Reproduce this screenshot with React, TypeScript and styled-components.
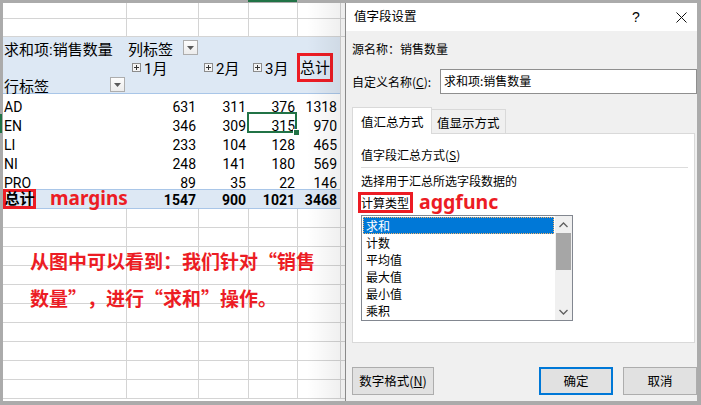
import React from "react";
import styled, { createGlobalStyle } from "styled-components";

const RED = "#ec1c24";
const GRID = "#d4d4d4";
const PIVOT_BG = "#dde8f4";
const PIVOT_LINE = "#a9c6e8";
const XL_GREEN = "#217346";
const SHEET_FONT = `"Roboto", "Noto Sans CJK SC", sans-serif`;
const UI_FONT = `"Noto Sans CJK SC", "Noto Sans", sans-serif`;

const GRID_COLS = [124, 72, 50, 49, 43, 4];
const PIVOT_COLS = [124, 72, 50, 49, 42];

const DATA: [string, number, number, number, number][] = [
  ["AD", 631, 311, 376, 1318],
  ["EN", 346, 309, 315, 970],
  ["LI", 233, 104, 128, 465],
  ["NI", 248, 141, 180, 569],
  ["PRO", 89, 35, 22, 146],
];
const TOTALS = [1547, 900, 1021, 3468];
const AGG_ITEMS = ["求和", "计数", "平均值", "最大值", "最小值", "乘积"];

const GlobalStyle = createGlobalStyle`
  html, body { margin: 0; padding: 0; background: #ababab; }
  body { width: 701px; height: 405px; overflow: hidden; }
`;

const Frame = styled.div`
  width: 701px;
  height: 405px;
  box-sizing: border-box;
  background: #ababab;
  display: flex;
  flex-direction: column;
  padding: 0 4px 4px 0;
`;

const TopStrip = styled.div`
  height: 3px;
  flex: none;
  display: flex;
`;

const ColMark = styled.div`
  margin-left: 248px;
  width: 49px;
  height: 2px;
  background: ${XL_GREEN};
`;

const Main = styled.div`
  display: flex;
  flex: 1;
  min-height: 0;
`;

const LeftStrip = styled.div`
  width: 3px;
  flex: none;
  display: flex;
  flex-direction: column;
`;

const RowMark = styled.div`
  margin-top: 111px;
  height: 19px;
  width: 2px;
  background: ${XL_GREEN};
`;

const Sheet = styled.div`
  width: 342px;
  flex: none;
  background: #fff;
  position: relative;
  overflow: hidden;
  display: flex;
  flex-direction: column;
  font-family: ${SHEET_FONT};
  color: #000;
  &::after {
    content: "";
    position: absolute;
    top: 0;
    right: 0;
    bottom: 0;
    width: 38px;
    background: linear-gradient(to right, rgba(0, 0, 0, 0), rgba(0, 0, 0, 0.07));
    pointer-events: none;
  }
`;

const GridRow = styled.div<{ $h: number }>`
  display: flex;
  flex: none;
  height: ${(p) => p.$h}px;
  box-sizing: border-box;
  border-bottom: 1px solid ${GRID};
`;

const GridCell = styled.div<{ $w: number }>`
  flex: none;
  width: ${(p) => p.$w}px;
  box-sizing: border-box;
  border-right: 1px solid ${GRID};
  &:last-child {
    border-right: none;
  }
`;

const PivotSection = styled.div`
  display: flex;
  flex: none;
`;

const PivotBody = styled.div`
  width: 337px;
  flex: none;
  display: flex;
  flex-direction: column;
`;

const FStrip = styled.div`
  flex: 1;
  border-left: 1px solid ${GRID};
  background: #fff;
`;

const PivotHead = styled.div`
  display: grid;
  grid-template-columns: ${PIVOT_COLS.map((c) => c + "px").join(" ")};
  grid-template-rows: 19px 19px 18px;
  background: ${PIVOT_BG};
  border-bottom: 1px solid ${PIVOT_LINE};
  font-size: 15px;
`;

const HeadCell = styled.div<{ $col: number; $row: string; $pl?: number; $top?: boolean }>`
  grid-column: ${(p) => p.$col};
  grid-row: ${(p) => p.$row};
  display: flex;
  align-items: ${(p) => (p.$top ? "flex-start" : "flex-end")};
  line-height: 12px;
  padding-left: ${(p) => p.$pl ?? 1}px;
  white-space: nowrap;
  min-width: 0;
`;

const DropBtn = styled.div<{ $mr: number }>`
  margin-left: auto;
  margin-right: ${(p) => p.$mr}px;
  margin-bottom: 1px;
  width: 15px;
  height: 15px;
  box-sizing: border-box;
  border: 1px solid #adadad;
  background: linear-gradient(#fdfdfd, #ececec);
  display: flex;
  align-items: center;
  justify-content: center;
`;

const Expander = styled.svg`
  flex: none;
  margin: 0 3px 3px 0;
`;

const TotalHeadBox = styled.div`
  margin: -3px 0 0 -1px;
  width: 36px;
  height: 29px;
  box-sizing: border-box;
  border: 3px solid ${RED};
  display: flex;
  align-items: center;
  justify-content: center;
  line-height: 16px;
  padding-top: 1px;
`;

const DataRow = styled.div`
  display: flex;
  height: 19px;
  flex: none;
  font-size: 14px;
  line-height: 11px;
`;

const DataCell = styled.div<{ $w: number; $num?: boolean; $sel?: boolean }>`
  flex: none;
  width: ${(p) => p.$w}px;
  box-sizing: border-box;
  display: flex;
  align-items: flex-end;
  justify-content: ${(p) => (p.$num ? "flex-end" : "flex-start")};
  padding: ${(p) => (p.$num ? "0 3px 0 0" : "0 0 0 1px")};
  position: relative;
  ${(p) =>
    p.$sel
      ? `
    &::after {
      content: "";
      position: absolute;
      left: -2px; right: 1px; top: -1px; bottom: -1px;
      border: 2px solid ${XL_GREEN};
    }
    &::before {
      content: "";
      position: absolute;
      right: -2px; bottom: -4px;
      width: 5px; height: 5px;
      background: ${XL_GREEN};
      border: 1px solid #fff;
      z-index: 1;
    }
  `
      : ""}
`;

const TotalRow = styled.div`
  display: flex;
  height: 20px;
  flex: none;
  background: ${PIVOT_BG};
  box-shadow: inset 0 1px 0 ${PIVOT_LINE}, inset 0 -1px 0 ${PIVOT_LINE};
  font-size: 14px;
  font-weight: 700;
  line-height: 14px;
`;

const TotalLabelCell = styled.div<{ $w: number }>`
  flex: none;
  width: ${(p) => p.$w}px;
  display: flex;
  align-items: center;
`;

const TotalBox = styled.div`
  width: 33px;
  height: 20px;
  box-sizing: border-box;
  border: 3px solid ${RED};
  display: flex;
  align-items: center;
  justify-content: center;
  font-size: 15px;
  line-height: 14px;
  white-space: nowrap;
`;

const NoteWord = styled.span`
  margin-left: 14px;
  font-family: "Noto Sans", sans-serif;
  font-weight: 700;
  font-size: 19px;
  line-height: 20px;
  color: ${RED};
  padding-bottom: 2px;
`;

const TotalNum = styled.div<{ $w: number }>`
  flex: none;
  width: ${(p) => p.$w}px;
  display: flex;
  align-items: flex-end;
  justify-content: flex-end;
  padding: 0 3px 2px 0;
  box-sizing: border-box;
`;

const Annotation = styled.div`
  position: absolute;
  left: 27px;
  top: 239px;
  font-family: "Noto Sans CJK SC", sans-serif;
  font-weight: 700;
  font-size: 19px;
  line-height: 37px;
  color: ${RED};
  white-space: nowrap;
  text-spacing-trim: space-all;
  z-index: 2;
`;

/* ---------- Dialog ---------- */

const Dialog = styled.div`
  width: 352px;
  flex: none;
  box-sizing: border-box;
  border-left: 1px solid #8a8a8a;
  background: #f0f0f0;
  display: flex;
  flex-direction: column;
  font-family: ${UI_FONT};
  font-size: 12px;
  color: #000;
`;

const TitleBar = styled.div`
  height: 28px;
  flex: none;
  background: #fff;
  display: flex;
  align-items: center;
  padding-left: 8px;
`;

const TitleText = styled.div`
  font-size: 12.5px;
  line-height: 18px;
  padding-bottom: 2px;
  margin-right: auto;
`;

const TitleBtn = styled.div<{ $w: number; $mr?: number }>`
  width: ${(p) => p.$w}px;
  margin-right: ${(p) => p.$mr ?? 0}px;
  height: 28px;
  display: flex;
  align-items: center;
  justify-content: center;
  font-family: "Liberation Sans", sans-serif;
  font-size: 14px;
`;

const Body = styled.div`
  display: flex;
  flex-direction: column;
  padding-left: 6px;
`;

const Line = styled.div<{ $mt: number }>`
  margin-top: ${(p) => p.$mt}px;
  height: 18px;
  line-height: 18px;
  white-space: nowrap;
`;

const NameRow = styled.div`
  margin-top: 11px;
  height: 25px;
  display: flex;
  align-items: center;
`;

const NameLabel = styled.div`
  width: 88px;
  flex: none;
  line-height: 18px;
  white-space: nowrap;
`;

const NameInput = styled.div`
  flex: 1;
  height: 25px;
  box-sizing: border-box;
  border: 1px solid #8f8f8f;
  background: #fff;
  padding-left: 3px;
  line-height: 22px;
  white-space: nowrap;
`;

const TabStrip = styled.div`
  margin-top: 13px;
  height: 26px;
  display: flex;
  align-items: flex-end;
`;

const Tab = styled.div<{ $active?: boolean }>`
  box-sizing: border-box;
  width: ${(p) => (p.$active ? 80 : 74)}px;
  height: ${(p) => (p.$active ? 27 : 24)}px;
  margin-bottom: ${(p) => (p.$active ? -1 : 0)}px;
  border: 1px solid #d9d9d9;
  border-bottom: none;
  ${(p) => (p.$active ? "" : "border-left: none;")}
  background: ${(p) => (p.$active ? "#fff" : "#f0f0f0")};
  padding-left: ${(p) => (p.$active ? 8 : 5)}px;
  padding-top: ${(p) => (p.$active ? 5 : 4)}px;
  line-height: 18px;
  font-size: 12.5px;
  position: relative;
  z-index: ${(p) => (p.$active ? 1 : 0)};
  white-space: nowrap;
`;

const Panel = styled.div`
  height: 210px;
  margin-right: 2px;
  box-sizing: border-box;
  background: #fff;
  border: 1px solid #d9d9d9;
  padding-left: 8px;
  display: flex;
  flex-direction: column;
`;

const Separator = styled.div`
  margin-top: 3px;
  margin-right: 6px;
  height: 1px;
  background: #dcdcdc;
`;

const TypeRow = styled.div`
  margin-top: 2px;
  height: 21px;
  display: flex;
  align-items: center;
`;

const TypeBox = styled.div`
  margin-left: -3px;
  width: 55px;
  height: 21px;
  box-sizing: border-box;
  border: 3px solid ${RED};
  display: flex;
  align-items: center;
  line-height: 15px;
  white-space: nowrap;
`;

const TypeNote = styled.span`
  margin-left: 6px;
  font-family: "Noto Sans", sans-serif;
  font-weight: 700;
  font-size: 19.5px;
  line-height: 21px;
  color: ${RED};
  padding-bottom: 3px;
`;

const ListBox = styled.div`
  margin-top: 2px;
  width: 212px;
  height: 106px;
  box-sizing: border-box;
  border: 1px solid #828790;
  background: #fff;
  display: flex;
`;

const Items = styled.div`
  flex: 1;
  padding: 1px;
  display: flex;
  flex-direction: column;
`;

const Item = styled.div<{ $sel?: boolean }>`
  height: 17px;
  box-sizing: border-box;
  flex: none;
  padding-left: 2px;
  line-height: 15px;
  font-size: 12px;
  overflow: hidden;
  background: ${(p) => (p.$sel ? "#0078d7" : "transparent")};
  color: ${(p) => (p.$sel ? "#fff" : "#000")};
  border: 1px ${(p) => (p.$sel ? "dotted #f4b36a" : "solid transparent")};
`;

const ScrollBar = styled.div`
  width: 17px;
  flex: none;
  background: #f0f0f0;
  display: flex;
  flex-direction: column;
  align-items: center;
`;

const ScrollArrow = styled.div`
  height: 17px;
  width: 17px;
  display: flex;
  align-items: center;
  justify-content: center;
  flex: none;
`;

const ScrollThumb = styled.div`
  width: 15px;
  height: 37px;
  background: #a6a6a6;
  flex: none;
`;

const ScrollSpace = styled.div`
  flex: 1;
`;

const ButtonRow = styled.div`
  margin-top: 24px;
  height: 28px;
  display: flex;
`;

const Button = styled.div<{ $w: number; $primary?: boolean; $ml?: number }>`
  width: ${(p) => p.$w}px;
  height: 28px;
  box-sizing: border-box;
  margin-left: ${(p) => (p.$ml === undefined ? 0 : p.$ml)}px;
  background: #e1e1e1;
  border: ${(p) => (p.$primary ? "2px solid #0078d7" : "1px solid #adadad")};
  display: flex;
  align-items: center;
  justify-content: center;
  font-size: 12.5px;
  line-height: 18px;
  white-space: nowrap;
`;

const ButtonGap = styled.div`
  flex: 1;
`;

const Chevron: React.FC<{ up?: boolean }> = ({ up }) => (
  <svg width="9" height="6" viewBox="0 0 9 6">
    <polyline
      points={up ? "0.5,5 4.5,1 8.5,5" : "0.5,1 4.5,5 8.5,1"}
      fill="none"
      stroke="#606060"
      strokeWidth="1.3"
    />
  </svg>
);

const DropTriangle = () => (
  <svg width="7" height="4" viewBox="0 0 7 4">
    <polygon points="0,0 7,0 3.5,4" fill="#5a5a5a" />
  </svg>
);

const ExpandIcon = () => (
  <Expander width="9" height="9" viewBox="0 0 9 9">
    <rect x="0.5" y="0.5" width="8" height="8" fill="#f4f4f4" stroke="#8c8c8c" />
    <line x1="2" y1="4.5" x2="7" y2="4.5" stroke="#333" />
    <line x1="4.5" y1="2" x2="4.5" y2="7" stroke="#333" />
  </Expander>
);

const CloseIcon = () => (
  <svg width="11" height="11" viewBox="0 0 11 11">
    <line x1="0.5" y1="0.5" x2="10.5" y2="10.5" stroke="#111" strokeWidth="1" />
    <line x1="10.5" y1="0.5" x2="0.5" y2="10.5" stroke="#111" strokeWidth="1" />
  </svg>
);

const EmptyRow: React.FC<{ h: number }> = ({ h }) => (
  <GridRow $h={h}>
    {GRID_COLS.map((w, i) => (
      <GridCell key={i} $w={w} />
    ))}
  </GridRow>
);

export default function App() {
  return (
    <>
      <GlobalStyle />
      <Frame>
        <TopStrip>
          <ColMark />
        </TopStrip>
        <Main>
          <LeftStrip>
            <RowMark />
          </LeftStrip>
          <Sheet>
            <EmptyRow h={16} />
            <EmptyRow h={18} />
            <PivotSection>
              <PivotBody>
                <PivotHead>
                  <HeadCell $col={1} $row="1">
                    求和项:销售数量
                  </HeadCell>
                  <HeadCell $col={2} $row="1">
                    列标签
                    <DropBtn $mr={1}>
                      <DropTriangle />
                    </DropBtn>
                  </HeadCell>
                  <HeadCell $col={2} $row="2" $pl={5}>
                    <ExpandIcon />
                    1月
                  </HeadCell>
                  <HeadCell $col={3} $row="2" $pl={5}>
                    <ExpandIcon />
                    2月
                  </HeadCell>
                  <HeadCell $col={4} $row="2" $pl={4}>
                    <ExpandIcon />
                    3月
                  </HeadCell>
                  <HeadCell $col={5} $row="2 / 4" $pl={0} $top>
                    <TotalHeadBox>总计</TotalHeadBox>
                  </HeadCell>
                  <HeadCell $col={1} $row="3">
                    行标签
                    <DropBtn $mr={2}>
                      <DropTriangle />
                    </DropBtn>
                  </HeadCell>
                </PivotHead>
                {DATA.map((row, r) => (
                  <DataRow key={row[0]}>
                    <DataCell $w={PIVOT_COLS[0]}>{row[0]}</DataCell>
                    {row.slice(1).map((v, c) => (
                      <DataCell key={c} $w={PIVOT_COLS[c + 1]} $num $sel={r === 1 && c === 2}>
                        {v}
                      </DataCell>
                    ))}
                  </DataRow>
                ))}
                <TotalRow>
                  <TotalLabelCell $w={PIVOT_COLS[0]}>
                    <TotalBox>总计</TotalBox>
                    <NoteWord>margins</NoteWord>
                  </TotalLabelCell>
                  {TOTALS.map((v, c) => (
                    <TotalNum key={c} $w={PIVOT_COLS[c + 1]}>
                      {v}
                    </TotalNum>
                  ))}
                </TotalRow>
              </PivotBody>
              <FStrip />
            </PivotSection>
            {Array.from({ length: 10 }).map((_, i) => (
              <EmptyRow key={i} h={19} />
            ))}
            <Annotation lang="zh-CN">
              从图中可以看到：我们针对“销售
              <br />
              数量”，进行“求和”操作。
            </Annotation>
          </Sheet>
          <Dialog lang="zh-CN">
            <TitleBar>
              <TitleText>值字段设置</TitleText>
              <TitleBtn $w={30} $mr={14}>?</TitleBtn>
              <TitleBtn $w={32}>
                <CloseIcon />
              </TitleBtn>
            </TitleBar>
            <Body>
              <Line $mt={9}>源名称：销售数量</Line>
              <NameRow>
                <NameLabel>
                  自定义名称(<u>C</u>):
                </NameLabel>
                <NameInput>求和项:销售数量</NameInput>
              </NameRow>
              <TabStrip>
                <Tab $active>值汇总方式</Tab>
                <Tab>值显示方式</Tab>
              </TabStrip>
              <Panel>
                <Line $mt={12}>
                  值字段汇总方式(<u>S</u>)
                </Line>
                <Separator />
                <Line $mt={4}>选择用于汇总所选字段数据的</Line>
                <TypeRow>
                  <TypeBox>计算类型</TypeBox>
                  <TypeNote>aggfunc</TypeNote>
                </TypeRow>
                <ListBox>
                  <Items>
                    {AGG_ITEMS.map((t, i) => (
                      <Item key={t} $sel={i === 0}>
                        {t}
                      </Item>
                    ))}
                  </Items>
                  <ScrollBar>
                    <ScrollArrow>
                      <Chevron up />
                    </ScrollArrow>
                    <ScrollThumb />
                    <ScrollSpace />
                    <ScrollArrow>
                      <Chevron />
                    </ScrollArrow>
                  </ScrollBar>
                </ListBox>
              </Panel>
              <ButtonRow>
                <Button $w={82}>
                  数字格式(<u>N</u>)
                </Button>
                <ButtonGap />
                <Button $w={74} $primary>
                  确定
                </Button>
                <Button $w={74} $ml={10}>
                  取消
                </Button>
              </ButtonRow>
            </Body>
          </Dialog>
        </Main>
      </Frame>
    </>
  );
}
